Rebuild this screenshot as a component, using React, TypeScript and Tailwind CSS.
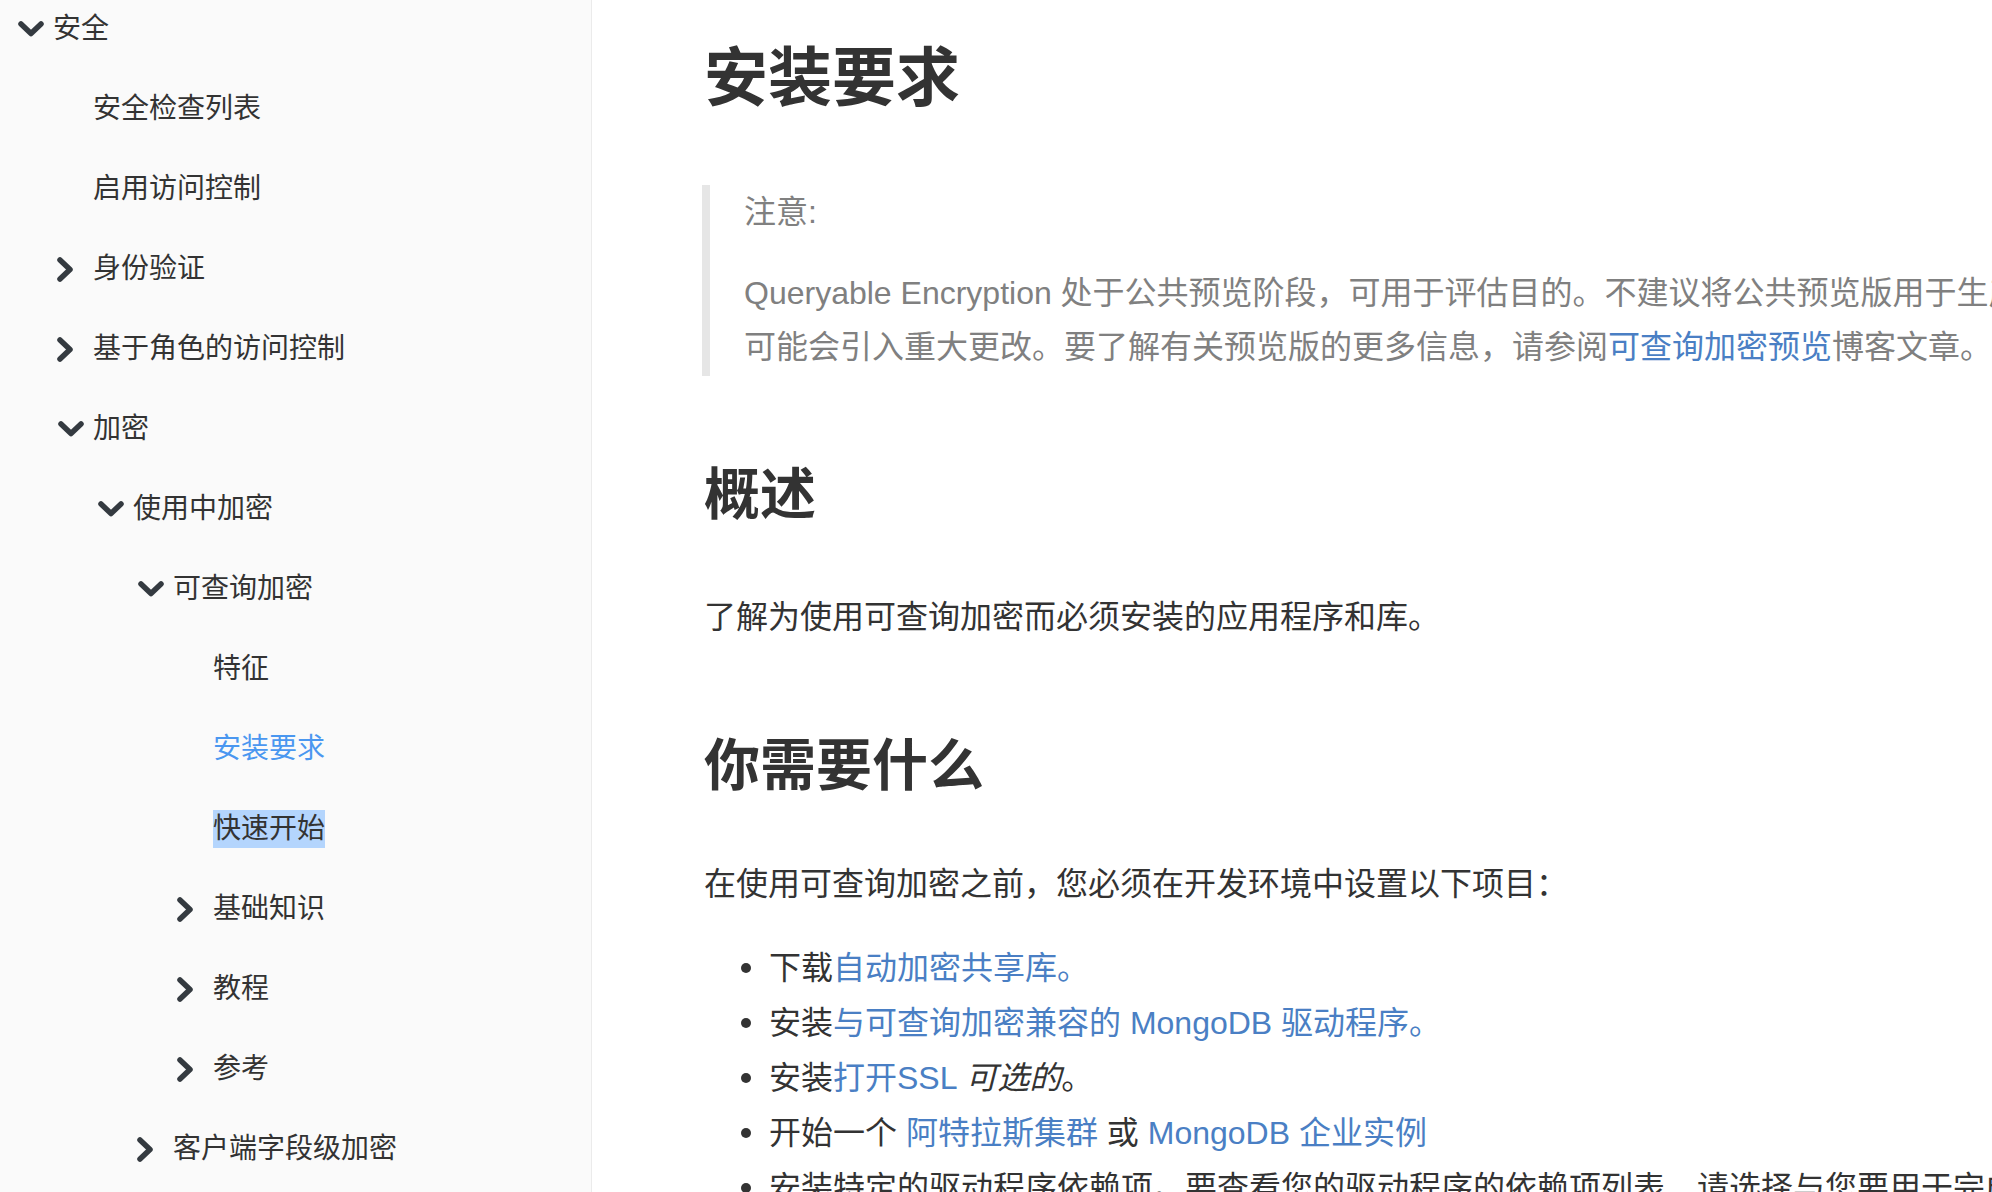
import type { ReactNode } from "react";

const FONT = { fontFamily: '"Liberation Sans", "Noto Sans CJK SC", sans-serif' };

type NavItem = {
  label: string;
  level: number;
  icon?: "down" | "right";
  active?: boolean;
  selected?: boolean;
};

const navItems: NavItem[] = [
  { label: "安全", level: 0, icon: "down" },
  { label: "安全检查列表", level: 1 },
  { label: "启用访问控制", level: 1 },
  { label: "身份验证", level: 1, icon: "right" },
  { label: "基于角色的访问控制", level: 1, icon: "right" },
  { label: "加密", level: 1, icon: "down" },
  { label: "使用中加密", level: 2, icon: "down" },
  { label: "可查询加密", level: 3, icon: "down" },
  { label: "特征", level: 4 },
  { label: "安装要求", level: 4, active: true },
  { label: "快速开始", level: 4, selected: true },
  { label: "基础知识", level: 4, icon: "right" },
  { label: "教程", level: 4, icon: "right" },
  { label: "参考", level: 4, icon: "right" },
  { label: "客户端字段级加密", level: 3, icon: "right" },
];

const indent = ["pl-[13px]", "pl-[53px]", "pl-[93px]", "pl-[133px]", "pl-[173px]"];

function ChevronDown() {
  return (
    <svg width="26" height="16" viewBox="0 0 26 16" className="ml-[5px]">
      <polyline
        points="3,3 13,12.5 23,3"
        fill="none"
        stroke="#343a40"
        strokeWidth="5.5"
        strokeLinecap="round"
        strokeLinejoin="round"
      />
    </svg>
  );
}

function ChevronRight() {
  return (
    <svg width="17" height="25" viewBox="0 0 17 25" className="ml-[4px]">
      <polyline
        points="3,3 13,12.5 3,22"
        fill="none"
        stroke="#343a40"
        strokeWidth="5.5"
        strokeLinecap="round"
        strokeLinejoin="round"
      />
    </svg>
  );
}

function Sidebar() {
  return (
    <aside className="w-[592px] shrink-0 h-full bg-[#fafafa] border-r border-[#ebebeb] overflow-hidden">
      <ul className="-mt-[11px]">
        {navItems.map((item) => (
          <li key={item.label} className={`h-[80px] flex items-center ${indent[item.level]}`}>
            <span className="w-[40px] shrink-0 flex items-center">
              {item.icon === "down" && <ChevronDown />}
              {item.icon === "right" && <ChevronRight />}
            </span>
            <span
              className={`text-[28px] leading-[38px] whitespace-nowrap ${
                item.active ? "text-[#4a97f0]" : "text-[#333]"
              } ${item.selected ? "bg-[#b4d5fd]" : ""}`}
            >
              {item.label}
            </span>
          </li>
        ))}
      </ul>
    </aside>
  );
}

function A({ children }: { children: ReactNode }) {
  return <span className="text-[#4a7fc4]">{children}</span>;
}

function Bullet({ children }: { children: ReactNode }) {
  return (
    <li className="flex items-center h-[55px] whitespace-nowrap">
      <span className="ml-[37px] w-[10px] h-[10px] rounded-full bg-[#333] shrink-0" />
      <span className="ml-[18px]">{children}</span>
    </li>
  );
}

export default function App() {
  return (
    <div className="w-[1992px] h-[1192px] flex bg-white overflow-hidden" style={FONT}>
      <Sidebar />
      <main className="flex-1 min-w-0 pl-[112px] pt-[38px] text-[#333] overflow-hidden">
        <h1 className="text-[64px] leading-[80px] font-bold whitespace-nowrap">安装要求</h1>

        <blockquote className="mt-[67px] -ml-[2px] border-l-[8px] border-[#e6e6e6] pl-[34px] pb-[2px] text-[32px] leading-[54px] text-[#808080] whitespace-nowrap">
          <p>注意:</p>
          <p className="mt-[27px]">
            Queryable Encryption 处于公共预览阶段，可用于评估目的。不建议将公共预览版用于生产部署，因为
          </p>
          <p>
            可能会引入重大更改。要了解有关预览版的更多信息，请参阅<A>可查询加密预览</A>博客文章。
          </p>
        </blockquote>

        <h2 className="mt-[84px] text-[56px] leading-[70px] font-bold">概述</h2>
        <p className="mt-[60px] text-[32px] leading-[54px] whitespace-nowrap">
          了解为使用可查询加密而必须安装的应用程序和库。
        </p>

        <h2 className="mt-[87px] text-[56px] leading-[70px] font-bold">你需要什么</h2>
        <p className="mt-[56px] text-[32px] leading-[54px] whitespace-nowrap">
          在使用可查询加密之前，您必须在开发环境中设置以下项目：
        </p>

        <ul className="mt-[29px] text-[32px] leading-[54px]">
          <Bullet>
            下载<A>自动加密共享库。</A>
          </Bullet>
          <Bullet>
            安装<A>与可查询加密兼容的 MongoDB 驱动程序。</A>
          </Bullet>
          <Bullet>
            安装<A>打开SSL</A> <em className="italic">可选的</em>。
          </Bullet>
          <Bullet>
            开始一个 <A>阿特拉斯集群</A> 或 <A>MongoDB 企业实例</A>
          </Bullet>
          <Bullet>
            安装特定的驱动程序依赖项。要查看您的驱动程序的依赖项列表，请选择与您要用于完成本指南的语言对应的选项卡：
          </Bullet>
        </ul>
      </main>
    </div>
  );
}
